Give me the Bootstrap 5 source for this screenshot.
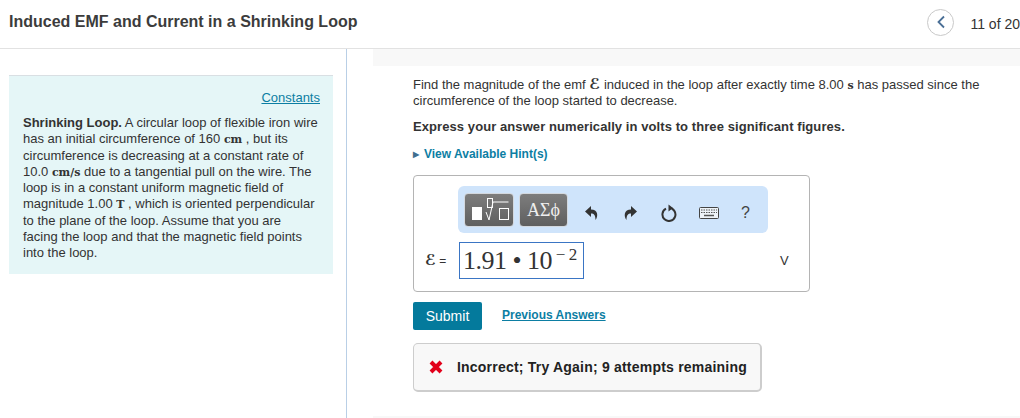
<!DOCTYPE html>
<html lang="en">

<head>
    <meta charset="UTF-8">
    <title>Induced EMF and Current in a Shrinking Loop</title>
    <link href="https://cdn.jsdelivr.net/npm/bootstrap@5.3.0/dist/css/bootstrap.min.css" rel="stylesheet">
    <style>
        html, body {
            height: 418px;
            overflow: hidden;
        }

        body {
            font-family: "Liberation Sans", Arial, sans-serif;
            font-size: 13px;
            line-height: 16px;
            color: #333;
            background: #fff;
        }

        a {
            color: #0c7ea3;
        }

        .top-bar {
            height: 49px;
            padding: 0 0 0 9px;
            border-bottom: 1px solid #e2e2e2;
        }

        .top-bar h1 {
            font-size: 16px;
            line-height: 20px;
            font-weight: 700;
            color: #3c3c3c;
            margin: 0 0 5px;
        }

        .back-circle {
            width: 27px;
            height: 27px;
            border: 1px solid #c9c9c9;
            border-radius: 50%;
            margin-right: 16px;
        }

        .page-count {
            font-size: 14px;
            color: #333;
            padding-top: 4px;
        }

        .main-area {
            height: 369px;
        }

        .side-col {
            width: 347px;
            padding: 26px 13px 0 9px;
            border-right: 1px solid #b9cfe6;
        }

        .intro-box {
            height: 199px;
            background: #e5f6f7;
            border-top: 1px solid #d9dfe3;
            padding: 14px 13px 0 14px;
        }

        .constants {
            margin-bottom: 9px;
        }

        .intro-box p {
            margin: 0;
            line-height: 16.3px;
        }

        .unit {
            font-family: "DejaVu Serif", serif;
            font-weight: 700;
            font-size: 11px;
            line-height: 0;
        }

        .right-col {
            margin-left: 26px;
            width: 647px;
        }

        .grey-strip {
            height: 17px;
            background: #f8f8f8;
        }

        .bottom-strip {
            height: 2px;
            background: #f8f8f8;
        }

        .q-body {
            height: 350px;
            padding: 11px 30px 0 40px;
        }

        .q-body p {
            margin: 0;
        }

        .script-e {
            font-family: "DejaVu Sans", sans-serif;
            font-weight: 700;
            font-style: italic;
            font-size: 15px;
            line-height: 0;
        }

        .q-body .answer-hint {
            margin-top: 10px;
            letter-spacing: .08px;
        }

        .q-body .hint-link {
            font-weight: 700;
            font-size: 12px;
            margin-top: 11px;
        }

        .hint-arrow {
            color: #3f6f8f;
            font-size: 8px;
            margin-right: 5px;
            vertical-align: 1px;
        }

        .answer-box {
            width: 397px;
            height: 117px;
            border: 1px solid #b4b4b4;
            border-radius: 4px;
            margin-top: 12px;
            padding: 10px 0 0 11px;
        }

        .eq-toolbar {
            width: 310px;
            height: 47px;
            margin-left: 33px;
            background: #cfe4fb;
            border-radius: 6px;
            padding: 7px 0 0 6px;
        }

        .tool-btn {
            height: 34px;
            border: 1px solid #d3d8de;
            border-radius: 4px;
            background: linear-gradient(#7d7d7d, #5f5f5f);
            color: #eee;
        }

        .tpl-btn {
            width: 50px;
        }

        .sym-btn {
            width: 49px;
            margin-left: 5px;
            font-family: "Liberation Serif", serif;
            font-size: 18px;
        }

        .tool-icons {
            margin-left: 16px;
            width: 166px;
        }

        .help-mark {
            font-size: 16px;
            color: #444;
        }

        .answer-row {
            margin-top: 9px;
        }

        .eq-label {
            width: 34px;
            font-size: 12px;
        }

        .math-field {
            width: 125px;
            height: 37px;
            border: 1px solid #3a75c4;
            padding-left: 3px;
            font-family: "Liberation Serif", serif;
            font-size: 26px;
            letter-spacing: -.5px;
            line-height: 36px;
            color: #333;
            white-space: nowrap;
        }

        .math-field sup {
            font-size: 17px;
            top: -9px;
            position: relative;
            vertical-align: baseline;
            line-height: 0;
        }

        .volt-unit {
            margin-left: 196px;
        }

        .submit-row {
            margin-top: 10px;
        }

        .btn.submit-btn {
            background: #047a9c;
            border: 0;
            border-radius: 2px;
            color: #fff;
            font-size: 14px;
            line-height: 16px;
            width: 69px;
            height: 28px;
            padding: 0;
        }

        .prev-link {
            font-weight: 700;
            margin-left: 20px;
            font-size: 12px;
            position: relative;
            top: -1px;
        }

        .feedback-box {
            width: 349px;
            height: 49px;
            margin-top: 13px;
            background: #f8f8f8;
            border: 1px solid #cdcdcd;
            border-bottom-width: 2px;
            border-right-width: 2px;
            border-radius: 5px;
            padding-left: 15px;
            font-size: 14px;
            letter-spacing: .21px;
            font-weight: 700;
            color: #222;
        }

        .feedback-box svg {
            margin-right: 14px;
        }
    </style>
</head>

<body>
    <div class="top-bar d-flex align-items-center justify-content-between">
        <h1>Induced EMF and Current in a Shrinking Loop</h1>
        <div class="d-flex align-items-center mb-1">
            <span class="back-circle d-flex align-items-center justify-content-center">
                <svg width="10" height="14" viewBox="0 0 10 14">
                    <path d="M8 1.5 2.5 7 8 12.5" fill="none" stroke="#4a6f96" stroke-width="1.8"/>
                </svg>
            </span>
            <span class="page-count">11 of 20</span>
        </div>
    </div>

    <div class="main-area d-flex">
        <div class="side-col">
            <div class="intro-box">
                <div class="constants text-end"><a href="#">Constants</a></div>
                <p><b>Shrinking Loop.</b> A circular loop of flexible iron wire has an initial circumference of 160 <span class="unit">cm</span> , but its circumference is decreasing at a constant rate of 10.0 <span class="unit">cm/s</span> due to a tangential pull on the wire. The loop is in a constant uniform magnetic field of magnitude 1.00 <span class="unit">T</span> , which is oriented perpendicular to the plane of the loop. Assume that you are<br>facing the loop and that the magnetic field points into the loop.</p>
            </div>
        </div>

        <div class="right-col">
            <div class="grey-strip"></div>
            <div class="q-body">
                <p>Find the magnitude of the emf <span class="script-e">ℰ</span> induced in the loop after exactly time 8.00 <span class="unit">s</span> has passed since the circumference of the loop started to decrease.</p>
                <p class="fw-bold answer-hint">Express your answer numerically in volts to three significant figures.</p>
                <p class="hint-link"><span class="hint-arrow">&#9654;</span><a class="text-decoration-none" href="#">View Available Hint(s)</a></p>

                <div class="answer-box">
                    <div class="eq-toolbar d-flex">
                        <div class="tool-btn tpl-btn">
                            <svg class="d-block" width="48" height="32" viewBox="0 0 48 32">
                                <rect x="7" y="13" width="10" height="13" fill="#fff"/>
                                <rect x="22.5" y="4.5" width="5" height="9" fill="none" stroke="#fff"/>
                                <path d="M21 18l3 8 4-18h15.500" fill="none" stroke="#fff"/>
                                <rect x="34.5" y="14.5" width="9" height="11" fill="none" stroke="#fff"/>
                            </svg>
                        </div>
                        <div class="tool-btn sym-btn d-flex align-items-center justify-content-center">ΑΣϕ</div>
                        <div class="tool-icons d-flex align-items-center justify-content-between">
                            <svg width="16" height="16" viewBox="0 0 16 16">
                                <path d="M7 1 1 6.5 7 12V8.5c3 0 4.500 1.500 4.500 6.500C14.500 11 14 4.500 7 4.500z" fill="#333"/>
                            </svg>
                            <svg width="16" height="16" viewBox="0 0 16 16">
                                <path d="M9 1l6 5.500L9 12V8.500C6 8.500 4.500 10 4.500 15 1.500 11 2 4.500 9 4.500z" fill="#333"/>
                            </svg>
                            <svg width="18" height="18" viewBox="0 0 18 18">
                                <path d="M6 4.700A6.500 6.500 0 1 0 9 4" fill="none" stroke="#333" stroke-width="2"/>
                                <path d="M8.500 0.500v7l4.500-3.500z" fill="#333"/>
                            </svg>
                            <svg width="20" height="12" viewBox="0 0 20 12">
                                <rect x=".5" y=".5" width="19" height="11" rx="1" fill="#eef3f8" stroke="#444"/>
                                <path d="M2 3h16M2 5.500h16" stroke="#555" stroke-dasharray="1.500 1"/>
                                <path d="M5 8.500h10" stroke="#555" stroke-width="1.500"/>
                            </svg>
                            <span class="help-mark">?</span>
                        </div>
                    </div>
                    <div class="answer-row d-flex align-items-center">
                        <span class="eq-label"><span class="script-e">ℰ</span> =</span>
                        <div class="math-field">1.91 • 10<sup> − 2</sup></div>
                        <span class="volt-unit">V</span>
                    </div>
                </div>

                <div class="submit-row d-flex align-items-center">
                    <button class="btn submit-btn" type="button">Submit</button>
                    <a class="prev-link" href="#">Previous Answers</a>
                </div>

                <div class="feedback-box d-flex align-items-center">
                    <svg width="14" height="14" viewBox="0 0 14 14">
                        <path d="M2 2 12 12M12 2 2 12" stroke="#e2001a" stroke-width="4"/>
                    </svg>
                    <span>Incorrect; Try Again; 9 attempts remaining</span>
                </div>
            </div>
            <div class="bottom-strip"></div>
        </div>
    </div>

    <script src="https://cdn.jsdelivr.net/npm/bootstrap@5.3.0/dist/js/bootstrap.bundle.min.js"></script>
</body>

</html>
